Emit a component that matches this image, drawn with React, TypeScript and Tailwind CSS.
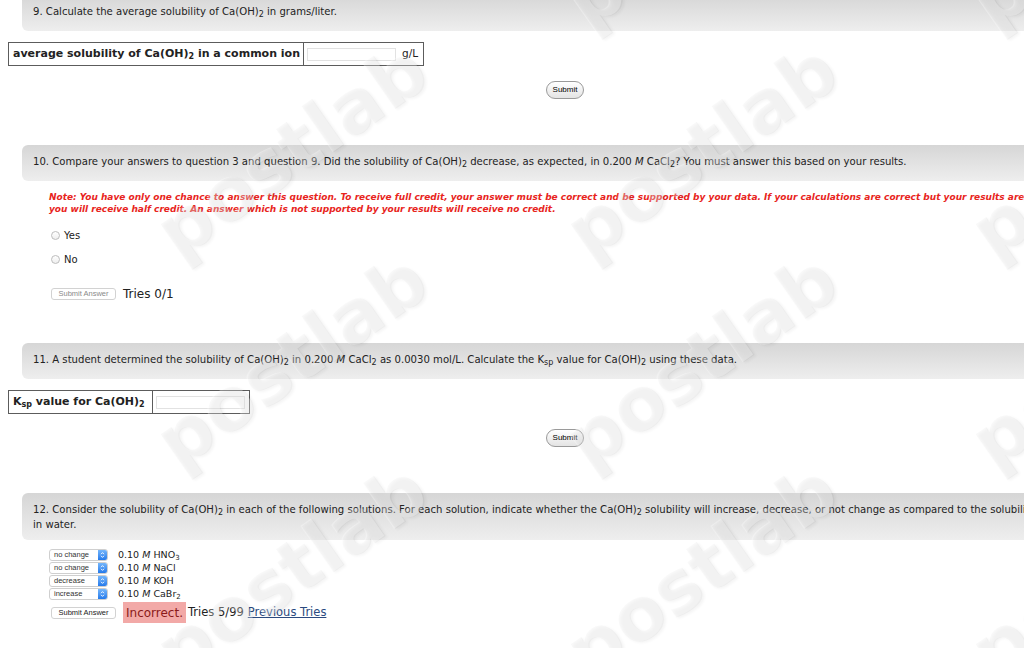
import React from 'react';

const marks = [
    { x: 700, y: -80 }, { x: 1105, y: -80 },
    { x: 290, y: 150 }, { x: 700, y: 150 }, { x: 1105, y: 150 },
    { x: 290, y: 360 }, { x: 700, y: 360 }, { x: 1105, y: 360 },
    { x: 290, y: 570 }, { x: 700, y: 570 }, { x: 1105, y: 570 },
];

const CaOH = () => (
    <>Ca(OH)<sub className="text-[8px]">2</sub></>
);

const Bar: React.FC<{ children: React.ReactNode; className?: string }> = ({ children, className = '' }) => (
    <div className={`ml-[22px] rounded-l-[6px] bg-linear-to-b from-[#d6d6d6] via-[#e2e2e2] to-[#eeeeee] pl-[11px] text-[10.1px] text-[#222] whitespace-nowrap ${className}`}>
        {children}
    </div>
);

const PillSubmit = () => (
    <button className="ml-[546px] flex h-[18px] w-[38px] items-center justify-center rounded-full border border-[#9a9a9a] bg-linear-to-b from-white to-[#e4e4e4] font-['Liberation_Sans',sans-serif] text-[8px] text-black">
        Submit
    </button>
);

const SubmitAnswer: React.FC<{ dim?: boolean }> = ({ dim }) => (
    <button className={`flex h-[12px] w-[65px] items-center justify-center rounded-[3px] border border-[#d2d2d2] bg-white font-['Liberation_Sans',sans-serif] text-[7.5px] ${dim ? 'text-[#8a8a8a]' : 'text-[#222]'}`}>
        Submit Answer
    </button>
);

const Radio: React.FC<{ label: string }> = ({ label }) => (
    <div className="flex h-[14px] items-center">
        <span className="ml-[51px] h-[9px] w-[9px] rounded-full border border-[#bdbdbd] bg-linear-to-b from-white to-[#eeeeee]" />
        <span className="ml-[4px] text-[10px] text-[#222]">{label}</span>
    </div>
);

const Select: React.FC<{ value: string }> = ({ value }) => (
    <div className="flex h-[12px] w-[59px] items-stretch rounded-[3px] border border-[#cfcfcf] bg-white">
        <span className="flex-1 pl-[4px] font-['Liberation_Sans',sans-serif] text-[7.5px] leading-[10px] text-[#333]">{value}</span>
        <span className="flex w-[9px] items-center justify-center rounded-r-[2px] bg-linear-to-b from-[#74b6fb] to-[#2379ea]">
            <svg width="5" height="8" viewBox="0 0 5 8">
                <path d="M1 3.2 L2.5 1.6 L4 3.2 M1 4.8 L2.5 6.4 L4 4.8" stroke="white" fill="none" strokeWidth="0.9" />
            </svg>
        </span>
    </div>
);

const solutions = [
    { value: 'no change', label: <>0.10 <i>M</i> HNO<sub className="text-[7px]">3</sub></> },
    { value: 'no change', label: <>0.10 <i>M</i> NaCl</> },
    { value: 'decrease', label: <>0.10 <i>M</i> KOH</> },
    { value: 'increase', label: <>0.10 <i>M</i> CaBr<sub className="text-[7px]">2</sub></> },
];

export default function App() {
    return (
        <div className="relative h-[648px] w-[1024px] overflow-hidden bg-white font-['DejaVu_Sans',Verdana,sans-serif] text-[#222]">
            {/* Question 9 */}
            <Bar className="-mt-[5px] pt-[10px] pb-[12px] leading-[14px]">9. Calculate the average solubility of <CaOH /> in grams/liter.</Bar>

            <table className="mt-[11px] ml-[8px] border-collapse border border-[#5c5c5c] text-[11px]">
                <tbody>
                    <tr className="h-[23px]">
                        <td className="border border-[#5c5c5c] pl-[4px] pr-[3px] font-bold whitespace-nowrap">
                            average solubility of <CaOH /> in a common ion
                        </td>
                        <td className="border border-[#5c5c5c] pl-[3px] pr-[5px]">
                            <div className="flex items-center">
                                <span className="h-[13px] w-[89px] border border-[#e2e2e2] bg-white" />
                                <span className="ml-[6px] text-[10.5px]">g/L</span>
                            </div>
                        </td>
                    </tr>
                </tbody>
            </table>

            <div className="mt-[15px]"><PillSubmit /></div>

            {/* Question 10 */}
            <Bar className="mt-[46px] pt-[10px] pb-[12px] leading-[14px]">
                10. Compare your answers to question 3 and question 9. Did the solubility of <CaOH /> decrease, as expected, in 0.200 <i>M</i> CaCl<sub className="text-[8px]">2</sub>? You must answer this based on your results.
            </Bar>

            <div className="mt-[10px] ml-[49px] text-[9px] font-bold italic leading-[12px] text-[#e8251d] whitespace-nowrap">
                <div>Note: You have only one chance to answer this question. To receive full credit, your answer must be correct and be supported by your data. If your calculations are correct but your results are not,</div>
                <div>you will receive half credit. An answer which is not supported by your results will receive no credit.</div>
            </div>

            <div className="mt-[13px]"><Radio label="Yes" /></div>
            <div className="mt-[10px]"><Radio label="No" /></div>

            <div className="mt-[21px] ml-[51px] flex h-[14px] items-center">
                <SubmitAnswer dim />
                <span className="ml-[7px] text-[12px]">Tries 0/1</span>
            </div>

            {/* Question 11 */}
            <Bar className="mt-[42px] pt-[10px] pb-[12px] leading-[14px]">
                11. A student determined the solubility of <CaOH /> in 0.200 <i>M</i> CaCl<sub className="text-[8px]">2</sub> as 0.0030 mol/L. Calculate the K<sub className="text-[8px]">sp</sub> value for <CaOH /> using these data.
            </Bar>

            <table className="mt-[11px] ml-[8px] border-collapse border border-[#5c5c5c] text-[11px]">
                <tbody>
                    <tr className="h-[23px]">
                        <td className="border border-[#5c5c5c] pl-[4px] pr-[7px] font-bold whitespace-nowrap">
                            K<sub className="text-[8px]">sp</sub> value for <CaOH />
                        </td>
                        <td className="border border-[#5c5c5c] pl-[3px] pr-[4px]">
                            <span className="block h-[13px] w-[89px] border border-[#e2e2e2] bg-white" />
                        </td>
                    </tr>
                </tbody>
            </table>

            <div className="mt-[15px]"><PillSubmit /></div>

            {/* Question 12 */}
            <Bar className="mt-[46px] pt-[9px] pb-[8px] leading-[15px]">
                <div>12. Consider the solubility of <CaOH /> in each of the following solutions. For each solution, indicate whether the <CaOH /> solubility will increase, decrease, or not change as compared to the solubility</div>
                <div>in water.</div>
            </Bar>

            <div className="mt-[9px] ml-[49px] flex flex-col gap-[1px]">
                {solutions.map((s, i) => (
                    <div key={i} className="flex h-[12px] items-center">
                        <Select value={s.value} />
                        <span className="ml-[10px] text-[9.5px] leading-[12px]">{s.label}</span>
                    </div>
                ))}
            </div>

            <div className="mt-[2px] ml-[51px] flex h-[21px] items-center">
                <SubmitAnswer />
                <span className="ml-[7px] flex h-[21px] items-center bg-[#f2a9a7] px-[3px] text-[12px] text-[#8b1a1a]">Incorrect.</span>
                <span className="ml-[2px] text-[11.5px]">Tries 5/99</span>
                <a className="ml-[4px] text-[11.5px] text-[#2b4a80] underline">Previous Tries</a>
            </div>

            {/* watermark */}
            <div className="pointer-events-none absolute inset-0">
                {marks.map((m, i) => (
                    <span
                        key={i}
                        className="absolute -translate-x-1/2 -translate-y-1/2 -rotate-[35deg] font-['DejaVu_Sans',sans-serif] text-[74px] font-bold leading-none text-white/30 [text-shadow:1px_1px_0_rgba(0,0,0,0.03),2px_3px_3px_rgba(0,0,0,0.045)]"
                        style={{ left: m.x, top: m.y }}
                    >
                        postlab
                    </span>
                ))}
            </div>
        </div>
    );
}
